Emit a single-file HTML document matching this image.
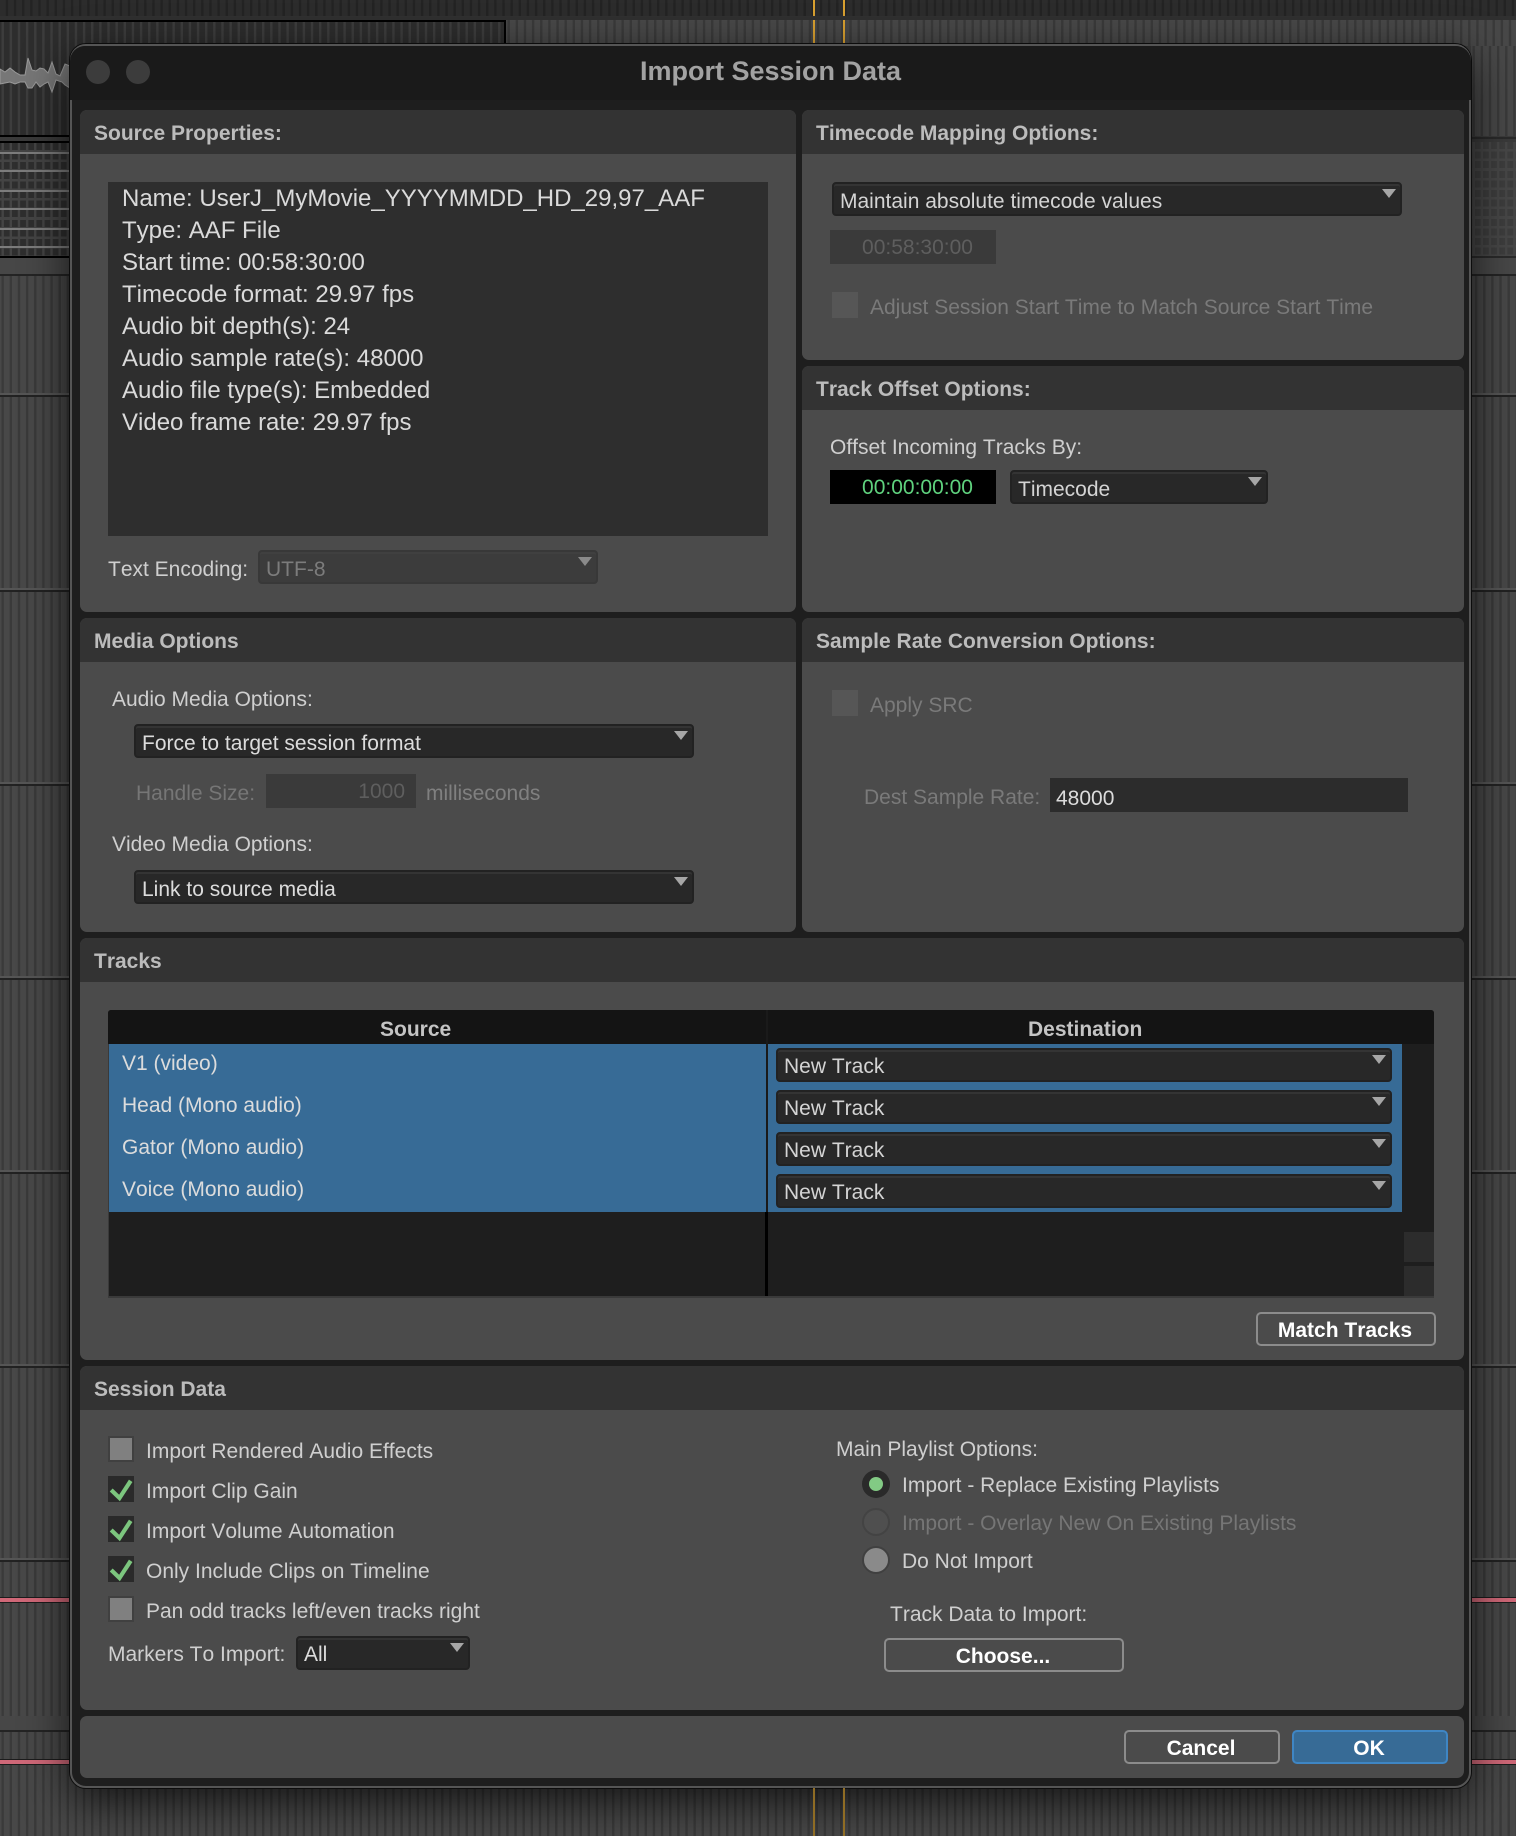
<!DOCTYPE html>
<html lang="en">
<head>
<meta charset="utf-8">
<title>Import Session Data</title>
<style>
html,body{margin:0;padding:0;width:1516px;height:1836px;overflow:hidden;background:#3c3c3c;font-family:"Liberation Sans",Arial,sans-serif;font-kerning:none;}
#root{position:relative;width:1516px;height:1836px;overflow:hidden;}
.a{position:absolute;}
.st{position:absolute;background-image:linear-gradient(90deg,#484848 0 70%,#3a3a3a 70% 100%);background-size:8.15px 100%;background-position:3.9px 0;}
.dk{position:absolute;background-image:linear-gradient(90deg,#2d2d2d 0 72%,#3d3d3d 72% 100%);background-size:8.15px 100%;background-position:3.9px 0;}
.sep{position:absolute;height:2px;background:#555;border-bottom:2px solid #222;}
.pk{position:absolute;height:4px;background:#d06878;border-top:1px solid #1c1c1c;border-bottom:1px solid #1c1c1c;}
.dlg{position:absolute;left:70px;top:44px;width:1401px;height:1744px;box-sizing:border-box;background:#1e1e1e;border:2px solid #555;border-radius:16px;outline:0;box-shadow:0 0 0 1px #0c0c0c,0 14px 46px rgba(0,0,0,.72);overflow:hidden;}
.bar{position:absolute;left:70px;top:46px;width:1401px;height:54px;background:#1a1a1a;border-radius:15px 15px 0 0;}
.light{position:absolute;width:24px;height:24px;border-radius:50%;background:#3c3c3c;top:60px;}
.p{position:absolute;background:#4b4b4b;border-radius:7px;overflow:hidden;}
.p i{display:block;height:44px;background:#333;}
.t{position:absolute;white-space:nowrap;font-size:21px;line-height:26px;height:26px;color:#cfcfcf;margin-top:1px;}
.h{font-weight:bold;color:#bcbcbc;margin-top:2px;}
.dis{color:#7a7a7a;}
.dd{position:absolute;box-sizing:border-box;background:#282828;border:2px solid #222;border-radius:4px;box-shadow:inset 0 2px 0 #343434;height:34px;}
.dd b{position:absolute;right:4px;top:5px;width:0;height:0;border-left:7px solid transparent;border-right:7px solid transparent;border-top:9px solid #a6a6a6;}
.dd.off{background:#3c3c3c;border-color:#383838;box-shadow:inset 0 2px 0 #404040;}
.dd.off b{border-top-color:#8a8a8a;}
.btn{position:absolute;box-sizing:border-box;height:34px;border:2px solid #8c8c8c;border-radius:5px;background:#4b4b4b;color:#fff;font-weight:bold;font-size:21px;line-height:33px;text-align:center;white-space:nowrap;padding-right:2px;}
.cb{position:absolute;width:26px;height:26px;left:108px;box-sizing:border-box;}
.cb.off{background:#808080;border:2px solid #404040;}
.cb.on{background:#2a2a2a;}
.cb svg{position:absolute;left:0;top:0;}
.cbd{position:absolute;width:26px;height:26px;left:832px;background:#565656;}
.r{position:absolute;border-radius:50%;box-sizing:border-box;width:28px;height:28px;left:862px;}
</style>
</head>
<body>
<div id="root">

<!-- background: top -->
<div class="a" style="left:0;top:0;width:1516px;height:16px;background-image:linear-gradient(90deg,#2c2c2c 0 70%,#232323 70% 100%);background-size:8.15px 100%;"></div>
<div class="a" style="left:0;top:16px;width:1516px;height:4px;background:#303030;"></div>
<div class="a" style="left:0;top:20px;width:506px;height:2px;background:#000;"></div>
<div class="a" style="left:504px;top:20px;width:2px;height:26px;background:#000;"></div>
<div class="dk" style="left:0;top:22px;width:504px;height:113px;"></div>
<div class="st" style="left:506px;top:20px;width:1010px;height:26px;"></div>
<div class="a" style="left:813px;top:0;width:2px;height:16px;background:#d8a030;"></div>
<div class="a" style="left:843px;top:0;width:2px;height:16px;background:#d8a030;"></div>
<div class="a" style="left:813px;top:20px;width:2px;height:26px;background:#d8a030;"></div>
<div class="a" style="left:843px;top:20px;width:2px;height:26px;background:#d8a030;"></div>

<!-- background: body stripes -->
<div class="st" style="left:0;top:275px;width:1516px;height:1561px;"></div>
<div class="st" style="left:1471px;top:46px;width:45px;height:90px;"></div>

<!-- band rows -->
<div class="a" style="left:0;top:135px;width:70px;height:2px;background:#000;"></div>
<div class="a" style="left:0;top:137px;width:70px;height:4px;background:#3a3a3a;"></div>
<div class="a" style="left:0;top:141px;width:70px;height:2px;background:#000;"></div>
<div class="a" style="left:1471px;top:137px;width:45px;height:5px;background:#3a3a3a;border-top:2px solid #2a2a2a;"></div>

<!-- grid region -->
<div class="a" style="left:0;top:143px;width:70px;height:113px;background-color:#2e2e2e;background-image:linear-gradient(90deg,transparent 0 70%,#444 70% 100%),repeating-linear-gradient(180deg,transparent 0 7px,#444 7px 9.6px);background-size:8.15px 100%,100% 100%;background-position:3.9px 0,0 0;"></div>
<div class="a" style="left:1471px;top:142px;width:45px;height:114px;background-color:#3d3d3d;background-image:linear-gradient(90deg,transparent 0 70%,#474747 70% 100%),repeating-linear-gradient(180deg,transparent 0 7px,#474747 7px 9.6px);background-size:8.15px 100%,100% 100%;background-position:3.9px 0,0 0;"></div>
<div class="a" style="left:0;top:152px;width:70px;height:2px;background:#7c7c7c;"></div>
<div class="a" style="left:0;top:170px;width:70px;height:2px;background:#7c7c7c;"></div>
<div class="a" style="left:0;top:190px;width:70px;height:2px;background:#7c7c7c;"></div>
<div class="a" style="left:0;top:208px;width:70px;height:2px;background:#7c7c7c;"></div>
<div class="a" style="left:0;top:228px;width:70px;height:2px;background:#7c7c7c;"></div>
<div class="a" style="left:0;top:246px;width:70px;height:2px;background:#7c7c7c;"></div>
<div class="a" style="left:0;top:256px;width:70px;height:2px;background:#000;"></div>
<div class="a" style="left:1471px;top:256px;width:45px;height:2px;background:#2a2a2a;"></div>
<div class="a" style="left:0;top:258px;width:1516px;height:16px;background:#474747;"></div>
<div class="a" style="left:0;top:274px;width:1516px;height:2px;background:#242424;"></div>

<div class="sep" style="left:0;top:393px;width:1516px;"></div>
<div class="sep" style="left:0;top:588px;width:1516px;"></div>
<div class="sep" style="left:0;top:782px;width:1516px;"></div>
<div class="sep" style="left:0;top:976px;width:1516px;"></div>
<div class="sep" style="left:0;top:1170px;width:1516px;"></div>
<div class="sep" style="left:0;top:1364px;width:1516px;"></div>
<div class="sep" style="left:0;top:1558px;width:1516px;"></div>
<div class="pk" style="left:0;top:1597px;width:1516px;"></div>
<div class="a" style="left:0;top:1716px;width:1516px;height:14px;background:#474747;"></div>
<div class="a" style="left:0;top:1730px;width:1516px;height:2px;background:#242424;"></div>
<div class="pk" style="left:0;top:1759px;width:1516px;"></div>

<!-- waveform -->
<svg class="a" style="left:0;top:50px;" width="70" height="50" viewBox="0 50 70 50">
<polygon points="0,69 5,72 10,68 15,72 20,75 25,75 28,58 32,70 36,71 40,68 44,69 48,73 52,62 56,74 60,76 65,64 70,66 70,88 65,85 62,82 56,80 52,92 48,82 44,84 40,87 36,82 32,88 28,88 25,82 20,82 15,84 10,82 5,83 0,84" fill="#777" stroke="#9a9a9a" stroke-width="1"/>
</svg>

<!-- bottom orange -->
<div class="a" style="left:813px;top:1788px;width:2px;height:48px;background:#8f6c24;z-index:3;"></div>
<div class="a" style="left:843px;top:1788px;width:2px;height:48px;background:#8f6c24;z-index:3;"></div>

<!-- dialog -->
<div class="dlg"></div>
<div class="bar"></div>
<div class="light" style="left:86px;"></div>
<div class="light" style="left:126px;"></div>
<div class="t h" style="left:640px;top:57px;font-size:27px;line-height:27px;height:27px;color:#a2a2a2;margin-top:1px;">Import Session Data</div>

<!-- panels -->
<div class="p" style="left:80px;top:110px;width:716px;height:502px;"><i></i></div>
<div class="p" style="left:802px;top:110px;width:662px;height:250px;"><i></i></div>
<div class="p" style="left:802px;top:366px;width:662px;height:246px;"><i></i></div>
<div class="p" style="left:80px;top:618px;width:716px;height:314px;"><i></i></div>
<div class="p" style="left:802px;top:618px;width:662px;height:314px;"><i></i></div>
<div class="p" style="left:80px;top:938px;width:1384px;height:422px;"><i></i></div>
<div class="p" style="left:80px;top:1366px;width:1384px;height:344px;"><i></i></div>
<div class="p" style="left:80px;top:1716px;width:1384px;height:62px;"></div>

<div class="t h" style="left:94px;top:119px;">Source Properties:</div>
<div class="t h" style="left:816px;top:119px;">Timecode Mapping Options:</div>
<div class="t h" style="left:816px;top:375px;">Track Offset Options:</div>
<div class="t h" style="left:94px;top:627px;">Media Options</div>
<div class="t h" style="left:816px;top:627px;">Sample Rate Conversion Options:</div>
<div class="t h" style="left:94px;top:947px;">Tracks</div>
<div class="t h" style="left:94px;top:1375px;">Session Data</div>

<!-- source properties -->
<div class="a" style="left:108px;top:182px;width:660px;height:354px;background:#2e2e2e;"></div>
<div class="t" style="left:122px;top:184px;font-size:24px;line-height:28px;height:28px;color:#dadada;">Name: UserJ_MyMovie_YYYYMMDD_HD_29,97_AAF</div>
<div class="t" style="left:122px;top:216px;font-size:24px;line-height:28px;height:28px;color:#dadada;">Type: AAF File</div>
<div class="t" style="left:122px;top:248px;font-size:24px;line-height:28px;height:28px;color:#dadada;">Start time: 00:58:30:00</div>
<div class="t" style="left:122px;top:280px;font-size:24px;line-height:28px;height:28px;color:#dadada;">Timecode format: 29.97 fps</div>
<div class="t" style="left:122px;top:312px;font-size:24px;line-height:28px;height:28px;color:#dadada;">Audio bit depth(s): 24</div>
<div class="t" style="left:122px;top:344px;font-size:24px;line-height:28px;height:28px;color:#dadada;">Audio sample rate(s): 48000</div>
<div class="t" style="left:122px;top:376px;font-size:24px;line-height:28px;height:28px;color:#dadada;">Audio file type(s): Embedded</div>
<div class="t" style="left:122px;top:408px;font-size:24px;line-height:28px;height:28px;color:#dadada;">Video frame rate: 29.97 fps</div>
<div class="t" style="left:108px;top:556px;">Text Encoding:</div>
<div class="dd off" style="left:258px;top:550px;width:340px;"><b></b></div>
<div class="t" style="left:266px;top:556px;color:#7c7c7c;">UTF-8</div>

<!-- timecode mapping -->
<div class="dd" style="left:832px;top:182px;width:570px;"><b></b></div>
<div class="t" style="left:840px;top:188px;color:#d4d4d4;">Maintain absolute timecode values</div>
<div class="a" style="left:830px;top:230px;width:166px;height:34px;background:#3a3a3a;"></div>
<div class="t" style="left:830px;top:234px;width:175px;text-align:center;color:#5e5e5e;">00:58:30:00</div>
<div class="cbd" style="top:292px;"></div>
<div class="t dis" style="left:870px;top:294px;">Adjust Session Start Time to Match Source Start Time</div>

<!-- track offset -->
<div class="t" style="left:830px;top:434px;">Offset Incoming Tracks By:</div>
<div class="a" style="left:830px;top:470px;width:166px;height:34px;background:#000;"></div>
<div class="t" style="left:830px;top:474px;width:175px;text-align:center;color:#5fd27e;">00:00:00:00</div>
<div class="dd" style="left:1010px;top:470px;width:258px;"><b></b></div>
<div class="t" style="left:1018px;top:476px;color:#d4d4d4;">Timecode</div>

<!-- media options -->
<div class="t" style="left:112px;top:686px;">Audio Media Options:</div>
<div class="dd" style="left:134px;top:724px;width:560px;"><b></b></div>
<div class="t" style="left:142px;top:730px;color:#dcdcdc;">Force to target session format</div>
<div class="t" style="left:136px;top:780px;color:#767676;">Handle Size:</div>
<div class="a" style="left:266px;top:774px;width:150px;height:34px;background:#3a3a3a;"></div>
<div class="t" style="left:266px;top:778px;width:139px;text-align:right;color:#5e5e5e;">1000</div>
<div class="t" style="left:426px;top:780px;color:#808080;">milliseconds</div>
<div class="t" style="left:112px;top:831px;">Video Media Options:</div>
<div class="dd" style="left:134px;top:870px;width:560px;"><b></b></div>
<div class="t" style="left:142px;top:876px;color:#dcdcdc;">Link to source media</div>

<!-- SRC -->
<div class="cbd" style="top:690px;"></div>
<div class="t dis" style="left:870px;top:692px;">Apply SRC</div>
<div class="t dis" style="left:864px;top:784px;">Dest Sample Rate:</div>
<div class="a" style="left:1050px;top:778px;width:358px;height:34px;background:#2c2c2c;"></div>
<div class="t" style="left:1056px;top:785px;color:#dcdcdc;">48000</div>

<!-- tracks table -->
<div class="a" style="left:108px;top:1010px;width:1326px;height:288px;background:#1e1e1e;border-radius:3px 3px 0 0;overflow:hidden;">
  <div class="a" style="left:0;top:0;width:1326px;height:34px;background:#141414;"></div>
  <div class="a" style="left:0;top:34px;width:658px;height:168px;background:#376b96;"></div>
  <div class="a" style="left:660px;top:34px;width:634px;height:168px;background:#376b96;"></div>
  <div class="a" style="left:658px;top:0;width:2px;height:202px;background:#1a1a1a;"></div>
  <div class="a" style="left:657px;top:202px;width:3px;height:84px;background:#000;"></div>
  <div class="a" style="left:1296px;top:222px;width:30px;height:30px;background:#2c2c2c;"></div>
  <div class="a" style="left:1296px;top:256px;width:30px;height:30px;background:#2c2c2c;"></div>
  <div class="a" style="left:0;top:34px;width:1px;height:254px;background:#3a3a3a;"></div>
  <div class="a" style="left:0;top:286px;width:1326px;height:2px;background:#3a3a3a;"></div>
</div>
<div class="t h" style="left:380px;top:1016px;color:#c4c4c4;margin-top:1px;">Source</div>
<div class="t h" style="left:1028px;top:1016px;color:#c4c4c4;margin-top:1px;">Destination</div>
<div class="t" style="left:122px;top:1050px;color:#dcdcdc;">V1 (video)</div>
<div class="t" style="left:122px;top:1092px;color:#dcdcdc;">Head (Mono audio)</div>
<div class="t" style="left:122px;top:1134px;color:#dcdcdc;">Gator (Mono audio)</div>
<div class="t" style="left:122px;top:1176px;color:#dcdcdc;">Voice (Mono audio)</div>

<div class="dd" style="left:776px;top:1048px;width:616px;"><b></b></div>
<div class="t" style="left:784px;top:1053px;color:#d4d4d4;">New Track</div>
<div class="dd" style="left:776px;top:1090px;width:616px;"><b></b></div>
<div class="t" style="left:784px;top:1095px;color:#d4d4d4;">New Track</div>
<div class="dd" style="left:776px;top:1132px;width:616px;"><b></b></div>
<div class="t" style="left:784px;top:1137px;color:#d4d4d4;">New Track</div>
<div class="dd" style="left:776px;top:1174px;width:616px;"><b></b></div>
<div class="t" style="left:784px;top:1179px;color:#d4d4d4;">New Track</div>

<div class="btn" style="left:1256px;top:1312px;width:180px;">Match Tracks</div>

<!-- session data left -->
<div class="cb off" style="top:1436px;"></div>
<div class="t" style="left:146px;top:1438px;">Import Rendered Audio Effects</div>
<div class="cb on" style="top:1476px;"><svg width="26" height="26" viewBox="0 0 26 26"><path d="M3.2 14 L11.5 22 L22.7 4.8" fill="none" stroke="#7cc67e" stroke-width="4.2"/></svg></div>
<div class="t" style="left:146px;top:1478px;">Import Clip Gain</div>
<div class="cb on" style="top:1516px;"><svg width="26" height="26" viewBox="0 0 26 26"><path d="M3.2 14 L11.5 22 L22.7 4.8" fill="none" stroke="#7cc67e" stroke-width="4.2"/></svg></div>
<div class="t" style="left:146px;top:1518px;">Import Volume Automation</div>
<div class="cb on" style="top:1556px;"><svg width="26" height="26" viewBox="0 0 26 26"><path d="M3.2 14 L11.5 22 L22.7 4.8" fill="none" stroke="#7cc67e" stroke-width="4.2"/></svg></div>
<div class="t" style="left:146px;top:1558px;">Only Include Clips on Timeline</div>
<div class="cb off" style="top:1596px;"></div>
<div class="t" style="left:146px;top:1598px;">Pan odd tracks left/even tracks right</div>
<div class="t" style="left:108px;top:1641px;">Markers To Import:</div>
<div class="dd" style="left:296px;top:1636px;width:174px;"><b></b></div>
<div class="t" style="left:304px;top:1641px;color:#dcdcdc;">All</div>

<!-- session data right -->
<div class="t" style="left:836px;top:1436px;">Main Playlist Options:</div>
<div class="r" style="top:1470px;background:#2a2a2a;"></div>
<div class="a" style="left:869px;top:1477px;width:14px;height:14px;border-radius:50%;background:#82ca84;"></div>
<div class="t" style="left:902px;top:1472px;">Import - Replace Existing Playlists</div>
<div class="r" style="top:1508px;background:#4f4f4f;border:2px solid #434343;"></div>
<div class="t" style="left:902px;top:1510px;color:#767676;">Import - Overlay New On Existing Playlists</div>
<div class="r" style="top:1546px;background:#8a8a8a;border:2px solid #404040;"></div>
<div class="t" style="left:902px;top:1548px;">Do Not Import</div>
<div class="t" style="left:890px;top:1601px;">Track Data to Import:</div>
<div class="btn" style="left:884px;top:1638px;width:240px;">Choose...</div>

<!-- footer -->
<div class="btn" style="left:1124px;top:1730px;width:156px;">Cancel</div>
<div class="btn" style="left:1292px;top:1730px;width:156px;background:#376b96;border-color:#3f86c4;">OK</div>

</div>
</body>
</html>
